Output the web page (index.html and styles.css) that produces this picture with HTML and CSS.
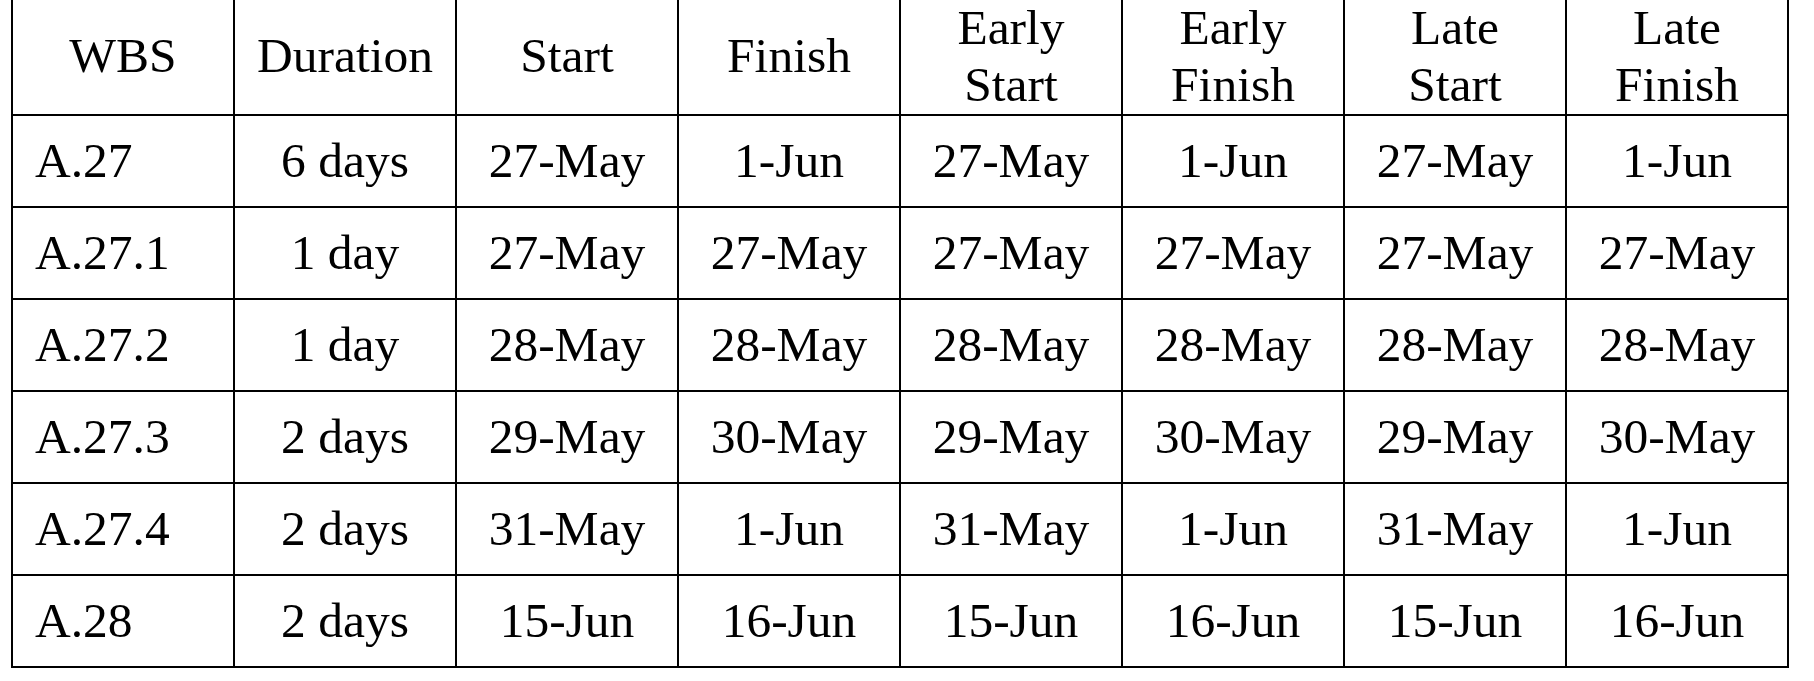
FILE: index.html
```html
<!DOCTYPE html>
<html>
<head>
<meta charset="utf-8">
<link rel="stylesheet" href="styles.css">
</head>
<body>
<div class="schedule">
  <div class="cell head">WBS</div>
  <div class="cell head">Duration</div>
  <div class="cell head">Start</div>
  <div class="cell head">Finish</div>
  <div class="cell head">Early<br>Start</div>
  <div class="cell head">Early<br>Finish</div>
  <div class="cell head">Late<br>Start</div>
  <div class="cell head">Late<br>Finish</div>

  <div class="cell wbs">A.27</div>
  <div class="cell">6 days</div>
  <div class="cell">27-May</div>
  <div class="cell">1-Jun</div>
  <div class="cell">27-May</div>
  <div class="cell">1-Jun</div>
  <div class="cell">27-May</div>
  <div class="cell">1-Jun</div>

  <div class="cell wbs">A.27.1</div>
  <div class="cell">1 day</div>
  <div class="cell">27-May</div>
  <div class="cell">27-May</div>
  <div class="cell">27-May</div>
  <div class="cell">27-May</div>
  <div class="cell">27-May</div>
  <div class="cell">27-May</div>

  <div class="cell wbs">A.27.2</div>
  <div class="cell">1 day</div>
  <div class="cell">28-May</div>
  <div class="cell">28-May</div>
  <div class="cell">28-May</div>
  <div class="cell">28-May</div>
  <div class="cell">28-May</div>
  <div class="cell">28-May</div>

  <div class="cell wbs">A.27.3</div>
  <div class="cell">2 days</div>
  <div class="cell">29-May</div>
  <div class="cell">30-May</div>
  <div class="cell">29-May</div>
  <div class="cell">30-May</div>
  <div class="cell">29-May</div>
  <div class="cell">30-May</div>

  <div class="cell wbs">A.27.4</div>
  <div class="cell">2 days</div>
  <div class="cell">31-May</div>
  <div class="cell">1-Jun</div>
  <div class="cell">31-May</div>
  <div class="cell">1-Jun</div>
  <div class="cell">31-May</div>
  <div class="cell">1-Jun</div>

  <div class="cell wbs">A.28</div>
  <div class="cell">2 days</div>
  <div class="cell">15-Jun</div>
  <div class="cell">16-Jun</div>
  <div class="cell">15-Jun</div>
  <div class="cell">16-Jun</div>
  <div class="cell">15-Jun</div>
  <div class="cell">16-Jun</div>
</div>
</body>
</html>
```
FILE: styles.css
```css
html, body {
  margin: 0;
  padding: 0;
  background: #ffffff;
}

body {
  font-family: "Liberation Serif", serif;
  color: #000000;
  overflow: hidden;
}

.schedule {
  display: grid;
  grid-template-columns: repeat(8, 222px);
  grid-template-rows: 119px repeat(6, 92px);
  width: max-content;
  margin: -5px 0 0 11px;
  border-left: 2px solid #000;
  border-top: 2px solid #000;
}

.cell {
  box-sizing: border-box;
  border-right: 2px solid #000;
  border-bottom: 2px solid #000;
  display: flex;
  align-items: center;
  justify-content: center;
  text-align: center;
  font-family: "Liberation Serif", serif;
  font-size: 49.5px;
  line-height: 54px;
  white-space: nowrap;
}

.head {
  line-height: 57px;
}

.wbs {
  justify-content: flex-start;
  padding-left: 22px;
}
```
